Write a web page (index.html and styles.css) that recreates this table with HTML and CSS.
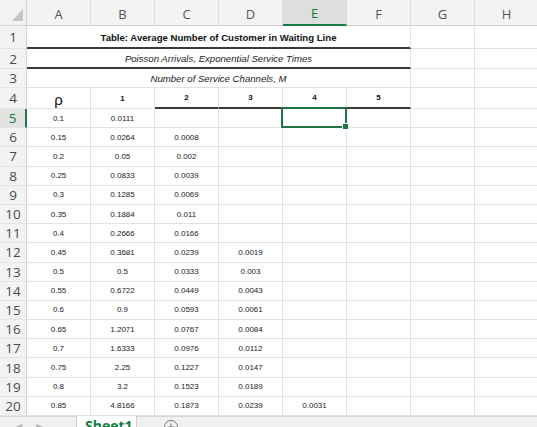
FILE: index.html
```html
<!DOCTYPE html>
<html>
<head>
<meta charset="utf-8">
<link rel="stylesheet" href="styles.css">
</head>
<body>
<div class="app">
  <div class="sheet">
    <div class="corner"><svg width="12" height="13" viewBox="0 0 12 13"><polygon points="11,0 11,12 0,12" fill="#c4c4c4"/></svg></div>
    <div class="ch">A</div><div class="ch">B</div><div class="ch">C</div><div class="ch">D</div><div class="ch sel">E</div><div class="ch">F</div><div class="ch">G</div><div class="ch">H</div>

    <div class="rh">1</div><div class="c m thick title">Table: Average Number of Customer in Waiting Line</div><div class="c"></div><div class="c"></div>
    <div class="rh">2</div><div class="c m thick it">Poisson Arrivals, Exponential Service Times</div><div class="c"></div><div class="c"></div>
    <div class="rh">3</div><div class="c m it">Number of Service Channels, M</div><div class="c"></div><div class="c"></div>
    <div class="rh">4</div><div class="c rho">ρ</div><div class="c hd">1</div><div class="c hd thick">2</div><div class="c hd thick">3</div><div class="c hd thick">4</div><div class="c hd thick">5</div><div class="c"></div><div class="c"></div>

    <div class="rh selr">5</div><div class="c">0.1</div><div class="c">0.0111</div><div class="c"></div><div class="c"></div><div class="c active"></div><div class="c"></div><div class="c"></div><div class="c"></div>
    <div class="rh">6</div><div class="c">0.15</div><div class="c">0.0264</div><div class="c">0.0008</div><div class="c"></div><div class="c"></div><div class="c"></div><div class="c"></div><div class="c"></div>
    <div class="rh">7</div><div class="c">0.2</div><div class="c">0.05</div><div class="c">0.002</div><div class="c"></div><div class="c"></div><div class="c"></div><div class="c"></div><div class="c"></div>
    <div class="rh">8</div><div class="c">0.25</div><div class="c">0.0833</div><div class="c">0.0039</div><div class="c"></div><div class="c"></div><div class="c"></div><div class="c"></div><div class="c"></div>
    <div class="rh">9</div><div class="c">0.3</div><div class="c">0.1285</div><div class="c">0.0069</div><div class="c"></div><div class="c"></div><div class="c"></div><div class="c"></div><div class="c"></div>
    <div class="rh">10</div><div class="c">0.35</div><div class="c">0.1884</div><div class="c">0.011</div><div class="c"></div><div class="c"></div><div class="c"></div><div class="c"></div><div class="c"></div>
    <div class="rh">11</div><div class="c">0.4</div><div class="c">0.2666</div><div class="c">0.0166</div><div class="c"></div><div class="c"></div><div class="c"></div><div class="c"></div><div class="c"></div>
    <div class="rh">12</div><div class="c">0.45</div><div class="c">0.3681</div><div class="c">0.0239</div><div class="c">0.0019</div><div class="c"></div><div class="c"></div><div class="c"></div><div class="c"></div>
    <div class="rh">13</div><div class="c">0.5</div><div class="c">0.5</div><div class="c">0.0333</div><div class="c">0.003</div><div class="c"></div><div class="c"></div><div class="c"></div><div class="c"></div>
    <div class="rh">14</div><div class="c">0.55</div><div class="c">0.6722</div><div class="c">0.0449</div><div class="c">0.0043</div><div class="c"></div><div class="c"></div><div class="c"></div><div class="c"></div>
    <div class="rh">15</div><div class="c">0.6</div><div class="c">0.9</div><div class="c">0.0593</div><div class="c">0.0061</div><div class="c"></div><div class="c"></div><div class="c"></div><div class="c"></div>
    <div class="rh">16</div><div class="c">0.65</div><div class="c">1.2071</div><div class="c">0.0767</div><div class="c">0.0084</div><div class="c"></div><div class="c"></div><div class="c"></div><div class="c"></div>
    <div class="rh">17</div><div class="c">0.7</div><div class="c">1.6333</div><div class="c">0.0976</div><div class="c">0.0112</div><div class="c"></div><div class="c"></div><div class="c"></div><div class="c"></div>
    <div class="rh">18</div><div class="c">0.75</div><div class="c">2.25</div><div class="c">0.1227</div><div class="c">0.0147</div><div class="c"></div><div class="c"></div><div class="c"></div><div class="c"></div>
    <div class="rh">19</div><div class="c">0.8</div><div class="c">3.2</div><div class="c">0.1523</div><div class="c">0.0189</div><div class="c"></div><div class="c"></div><div class="c"></div><div class="c"></div>
    <div class="rh">20</div><div class="c">0.85</div><div class="c">4.8166</div><div class="c">0.1873</div><div class="c">0.0239</div><div class="c">0.0031</div><div class="c"></div><div class="c"></div><div class="c"></div>
  </div>
  <div class="tabs">
    <div class="nav"><span class="arrow">&#9664;</span><span class="arrow">&#9654;</span></div>
    <div class="tab">Sheet1</div>
    <div class="add"><svg width="16" height="16" viewBox="0 0 16 16"><circle cx="8" cy="8" r="6.5" fill="none" stroke="#7a7a7a" stroke-width="1"/><path d="M8 4.5v7M4.5 8h7" stroke="#7a7a7a" stroke-width="1"/></svg></div>
  </div>
</div>
</body>
</html>
```
FILE: styles.css
```css
html, body {
  margin: 0;
  padding: 0;
  background: #ffffff;
}
.app {
  width: 537px;
  height: 427px;
  overflow: hidden;
  display: flex;
  flex-direction: column;
}
.sheet {
  display: grid;
  grid-template-columns: 27px repeat(8, 64px);
  grid-template-rows: 26px 23px 20px 19px 21px repeat(16, 19.1875px);
  flex: none;
  width: 539px;
}
.corner {
  background: #f3f3f3;
  border-right: 1px solid #d4d4d4;
  border-bottom: 1px solid #d4d4d4;
  box-sizing: border-box;
  display: flex;
  align-items: flex-end;
  justify-content: flex-end;
  padding: 0 2px 3px 0;
}
.corner svg { display: block; }
.ch {
  background: #f3f3f3;
  border-right: 1px solid #dcdcdc;
  border-bottom: 1px solid #d0d0d0;
  box-sizing: border-box;
  display: flex;
  align-items: center;
  justify-content: center;
  font-family: "Open Sans", "Noto Sans", sans-serif;
  font-size: 13px;
  color: #555555;
  padding-top: 2px;
}
.ch.sel {
  background: #dedede;
  color: #107c41;
  border-bottom: 2px solid #1d7a45;
}
.rh {
  background: #f3f3f3;
  border-right: 1px solid #d4d4d4;
  border-bottom: 1px solid #e6e6e6;
  box-sizing: border-box;
  display: flex;
  align-items: center;
  justify-content: center;
  font-family: "Open Sans", "Noto Sans", sans-serif;
  font-size: 13.5px;
  color: #4a4a4a;
}
.rh.selr {
  background: #e2e2e2;
  color: #107c41;
  border-right: 2px solid #1d7a45;
}
.c {
  border-right: 1px solid #e2e2e2;
  border-bottom: 1px solid #e2e2e2;
  box-sizing: border-box;
  display: flex;
  align-items: center;
  justify-content: center;
  font-family: "Liberation Sans", Arial, sans-serif;
  font-size: 8px;
  color: #222222;
  white-space: nowrap;
  position: relative;
}
.c.m {
  grid-column: span 6;
  border-right: 1px solid #e2e2e2;
}
.c.thick {
  border-bottom: 2px solid #3a3a3a;
}
.title {
  font-weight: bold;
  font-size: 9.6px;
  color: #111111;
  padding-top: 1px;
}
.it {
  font-style: italic;
  font-size: 9.6px;
  color: #222222;
}
.rho {
  font-size: 15px;
  color: #111111;
  padding-top: 3px;
}
.hd {
  font-weight: bold;
  color: #111111;
}
.active::after {
  content: "";
  position: absolute;
  left: -2px;
  top: -2px;
  right: -1px;
  bottom: -1px;
  border: 2px solid #217346;
}
.active::before {
  content: "";
  position: absolute;
  right: -3px;
  bottom: -3px;
  width: 5px;
  height: 5px;
  background: #217346;
  border: 1px solid #ffffff;
  z-index: 2;
}
.tabs {
  flex: none;
  height: 30px;
  background: #f0f0f0;
  border-top: 1px solid #d6d6d6;
  display: flex;
  align-items: stretch;
}
.nav {
  width: 77px;
  display: flex;
  align-items: flex-start;
  gap: 14px;
  padding: 5px 0 0 16px;
  box-sizing: border-box;
  border-right: 1px solid #d0d0d0;
}
.arrow {
  font-size: 8px;
  color: #b8b8b8;
  font-family: "DejaVu Sans", sans-serif;
}
.tab {
  width: 60px;
  background: #ffffff;
  border-right: 1px solid #d0d0d0;
  margin-top: -1px;
  font-family: "Open Sans", "Noto Sans", sans-serif;
  font-weight: bold;
  font-size: 14px;
  color: #107c41;
  padding: 0 0 0 8px;
  box-sizing: border-box;
  line-height: 20px;
}
.add {
  padding: 2px 0 0 26px;
}
.add svg { display: block; }
```
